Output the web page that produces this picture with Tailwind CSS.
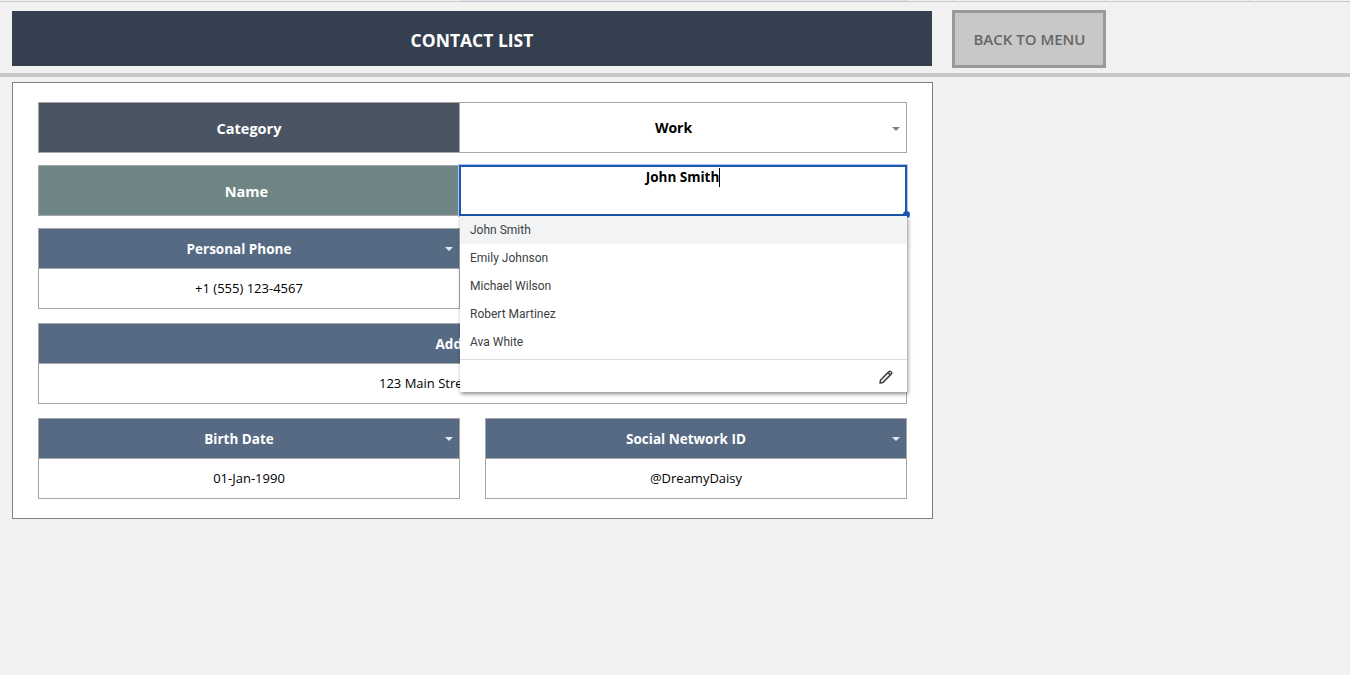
<!DOCTYPE html>
<html lang="en">
<head>
    <meta charset="UTF-8">
    <title>Contact List</title>
    <script src="https://cdn.jsdelivr.net/npm/@tailwindcss/browser@4"></script>
</head>
<body class="bg-[#f1f1f1] font-['Open_Sans',sans-serif] h-[675px] overflow-hidden">
    <!-- top strip -->
    <div class="flex h-[2px] border-b border-[#c8c8c8]">
        <div class="w-[12px] border-r border-[#d4d4d4]"></div>
        <div class="w-[26px] border-r border-[#d4d4d4]"></div>
        <div class="w-[422px]"></div>
        <div class="w-[447px] bg-[#dbe5f1] border-r border-[#d4d4d4]"></div>
        <div class="w-[25px] border-r border-[#d4d4d4]"></div>
        <div class="w-[21px] border-r border-[#d4d4d4]"></div>
        <div class="w-[152px] border-r border-[#d4d4d4]"></div>
        <div class="w-[21px] border-r border-[#d4d4d4]"></div>
        <div class="w-[61px] border-r border-[#d4d4d4]"></div>
        <div class="w-[62px] border-r border-[#d4d4d4]"></div>
        <div class="w-[62px] border-r border-[#d4d4d4]"></div>
    </div>

    <!-- title and button -->
    <div class="flex items-start gap-[20px] pl-[12px] mt-[8px]">
        <div class="w-[920px] h-[55px] mt-[1px] pt-[3px] bg-[#353f4f] flex items-center justify-center text-white text-[17.5px] font-bold">CONTACT LIST</div>
        <button class="w-[154px] h-[58px] pl-[1px] bg-[#c8c8c8] border-[3px] border-[#999999] text-[#666666] text-[15px] font-semibold">BACK TO MENU</button>
    </div>
    <div class="h-[4px] mt-[5px] bg-[#c8c8c8]"></div>

    <!-- card -->
    <div class="relative w-[921px] h-[437px] mt-[5px] ml-[12px] bg-white border border-[#808080] pl-[25px] pt-[19px]">
        <div class="w-[869px] flex flex-col">
            <div class="flex h-[51px]">
                <div class="w-[422px] pt-[2px] bg-[#4a5462] border border-[#a6a6a6] flex items-center justify-center text-white text-[14.5px] font-bold">Category</div>
                <div class="relative w-[447px] bg-white border border-[#a6a6a6] border-l-0 flex items-center justify-center pr-[19px] text-black text-[14px] font-bold">
                    Work
                    <span class="absolute right-[6px] top-[24px] border-x-[4px] border-x-transparent border-t-[4px] border-t-[#808080]"></span>
                </div>
            </div>

            <div class="flex h-[51px] mt-[12px]">
                <div class="w-[421px] pt-[2px] bg-[#6f8585] border border-[#a6a6a6] flex items-center justify-center pr-[4px] text-white text-[14.5px] font-bold">Name</div>
                <div class="relative w-[448px] bg-white border-2 border-[#1c57ab] outline outline-[#a9c8f5] flex justify-center pt-[1px] text-black text-[13.5px] font-bold">
                    <span class="absolute -right-[5px] -bottom-[4px] w-[7px] h-[7px] rounded-full bg-[#1c57ab]"></span>
                    <span class="border-r border-black h-[19px] leading-[19px]">John Smith</span>
                </div>
            </div>

            <div class="grid grid-cols-[422px_422px] gap-x-[25px] mt-[12px]">
                <div class="h-[81px] bg-white border border-[#a6a6a6] flex flex-col">
                    <div class="relative h-[40px] pt-[2px] bg-[#566a84] border-b border-[#a6a6a6] flex items-center justify-center pr-[20px] text-white text-[13.5px] font-bold">
                        Personal Phone
                        <span class="absolute right-[6px] top-[18px] border-x-[4px] border-x-transparent border-t-[4px] border-t-[#e6eaef]"></span>
                    </div>
                    <div class="flex-1 flex items-center justify-center text-black text-[13px]">+1 (555) 123-4567</div>
                </div>
                <div></div>
            </div>

            <div class="h-[81px] mt-[14px] bg-white border border-[#a6a6a6] flex flex-col">
                <div class="h-[40px] pt-[2px] bg-[#566a84] border-b border-[#a6a6a6] flex items-center justify-center pr-[20px] text-white text-[13.5px] font-bold">Address</div>
                <div class="flex-1 flex items-center justify-center text-black text-[13px]">123 Main Street, Anytown, USA</div>
            </div>

            <div class="grid grid-cols-[422px_422px] gap-x-[25px] mt-[14px]">
                <div class="h-[81px] bg-white border border-[#a6a6a6] flex flex-col">
                    <div class="relative h-[40px] pt-[2px] bg-[#566a84] border-b border-[#a6a6a6] flex items-center justify-center pr-[20px] text-white text-[13.5px] font-bold">
                        Birth Date
                        <span class="absolute right-[6px] top-[18px] border-x-[4px] border-x-transparent border-t-[4px] border-t-[#e6eaef]"></span>
                    </div>
                    <div class="flex-1 flex items-center justify-center text-black text-[13px]">01-Jan-1990</div>
                </div>
                <div class="h-[81px] bg-white border border-[#a6a6a6] flex flex-col">
                    <div class="relative h-[40px] pt-[2px] bg-[#566a84] border-b border-[#a6a6a6] flex items-center justify-center pr-[20px] text-white text-[13.5px] font-bold">
                        Social Network ID
                        <span class="absolute right-[6px] top-[18px] border-x-[4px] border-x-transparent border-t-[4px] border-t-[#e6eaef]"></span>
                    </div>
                    <div class="flex-1 flex items-center justify-center text-black text-[13px]">@DreamyDaisy</div>
                </div>
            </div>
        </div>

        <!-- autocomplete menu over the form -->
        <div class="absolute left-[447px] top-[133px] w-[447px] h-[176px] bg-white shadow-[1px_2px_4px_rgba(0,0,0,0.45)] font-['Roboto',sans-serif] text-[12px] text-[#3c4043] flex flex-col">
            <div class="h-[28px] flex items-center pl-[10px] bg-[#f1f3f4]">John Smith</div>
            <div class="h-[28px] flex items-center pl-[10px]">Emily Johnson</div>
            <div class="h-[28px] flex items-center pl-[10px]">Michael Wilson</div>
            <div class="h-[28px] flex items-center pl-[10px]">Robert Martinez</div>
            <div class="h-[28px] flex items-center pl-[10px]">Ava White</div>
            <div class="flex-1 mt-[3px] pt-[2px] border-t border-[#dadce0] flex items-center justify-end pr-[14px]">
                <svg width="14" height="14" viewBox="0 0 14 14" fill="none" stroke="#3c4043" stroke-width="1.5" stroke-linejoin="round"><path d="M1 13 L1.6 10 L10 1.6 Q11 0.8 12 1.8 Q13.2 2.9 12.4 3.9 L4 12.4 Z"/><path d="M9 2.6 L11.4 5"/></svg>
            </div>
        </div>
    </div>
</body>
</html>
